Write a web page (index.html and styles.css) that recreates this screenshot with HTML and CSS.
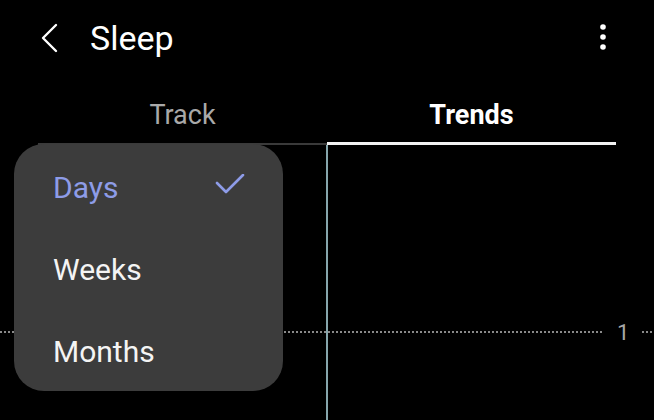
FILE: index.html
```html
<!DOCTYPE html>
<html>
<head>
<meta charset="utf-8">
<link rel="stylesheet" href="styles.css">
</head>
<body>
<div class="screen">
  <header class="appbar">
    <svg class="back" width="20" height="30" viewBox="0 0 20 30"><polyline points="16,2 3,15 16,28" fill="none" stroke="#fff" stroke-width="2.4" stroke-linecap="round" stroke-linejoin="round"/></svg>
    <h1 class="title">Sleep</h1>
    <svg class="more" width="10" height="30" viewBox="0 0 10 30"><circle cx="5" cy="5" r="2.8" fill="#fff"/><circle cx="5" cy="15" r="2.8" fill="#fff"/><circle cx="5" cy="25" r="2.8" fill="#fff"/></svg>
  </header>
  <nav class="tabs">
    <div class="tab">Track</div>
    <div class="tab active">Trends</div>
  </nav>
  <main class="chart">
    <div class="cursor"></div>
    <div class="gridrow">
      <div class="dots main-dots"></div>
      <span class="ylabel">1</span>
      <div class="dots tail-dots"></div>
    </div>
    <div class="menu">
      <div class="item selected"><span>Days</span>
        <svg class="check" width="30" height="20" viewBox="0 0 30 20"><polyline points="2,9 11,18 28,1" fill="none" stroke="#8e9ce8" stroke-width="2.6" stroke-linecap="round" stroke-linejoin="round"/></svg>
      </div>
      <div class="item">Weeks</div>
      <div class="item">Months</div>
    </div>
  </main>
</div>
</body>
</html>
```
FILE: styles.css
```css
html, body {
  margin: 0;
  padding: 0;
  background: #000;
}
body {
  font-family: Roboto, "Noto Sans", sans-serif;
  color: #fff;
}
.screen {
  width: 654px;
  height: 420px;
  overflow: hidden;
  display: flex;
  flex-direction: column;
}
.appbar {
  height: 80px;
  display: flex;
  align-items: center;
  padding: 0 0 4px 40px;
  box-sizing: border-box;
}
.back {
  display: block;
}
.title {
  margin: 0 0 0 30px;
  font-size: 34px;
  font-weight: 400;
  flex: 1;
}
.more {
  display: block;
  margin-right: 46px;
  margin-bottom: 2px;
}
.tabs {
  display: flex;
  margin: 0 38px;
  height: 65px;
}
.tab {
  flex: 1;
  display: flex;
  align-items: center;
  justify-content: center;
  font-size: 27px;
  color: #a9a9a9;
  border-bottom: 2px solid #3a3a3a;
  box-sizing: border-box;
  padding-top: 6px;
}
.tab.active {
  color: #fff;
  font-weight: 700;
  border-bottom: 3px solid #f2f2f2;
  padding-top: 7px;
}
.chart {
  position: relative;
  flex: 1;
}
.cursor {
  position: absolute;
  left: 326px;
  top: 0;
  bottom: 0;
  width: 2px;
  background: #86a6ac;
}
.gridrow {
  display: flex;
  align-items: center;
  margin-top: 175px;
  height: 24px;
}
.dots {
  height: 2px;
  background: repeating-linear-gradient(90deg, #8a8a8a 0 2px, transparent 2px 4px);
}
.main-dots {
  width: 604px;
}
.ylabel {
  font-size: 22px;
  color: #a8a8a8;
  margin: 0 13px;
}
.tail-dots {
  flex: 1;
}
.menu {
  position: absolute;
  left: 14px;
  top: -1px;
  width: 269px;
  height: 247px;
  background: #3c3c3c;
  border-radius: 30px;
  padding-top: 2px;
  box-sizing: border-box;
}
.item {
  height: 82px;
  display: flex;
  align-items: center;
  justify-content: space-between;
  padding: 0 38px 0 39px;
  font-size: 30px;
  color: #f4f4f4;
}
.item.selected {
  color: #8e9ce8;
}
.check {
  display: block;
  margin-top: -6px;
}
```
